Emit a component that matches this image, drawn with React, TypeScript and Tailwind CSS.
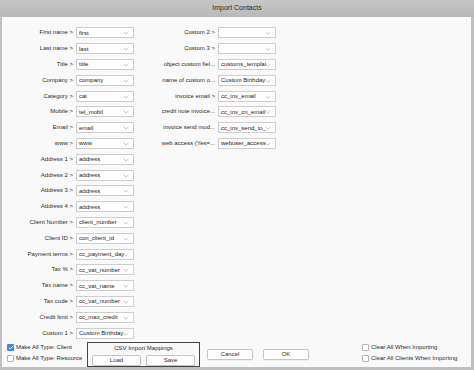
import React from "react";

const leftFields: [string, string][] = [
  ["First name >", "first"],
  ["Last name >", "last"],
  ["Title >", "title"],
  ["Company >", "company"],
  ["Category >", "cat"],
  ["Mobile >", "tel_mobil"],
  ["Email >", "email"],
  ["www >", "www"],
  ["Address 1 >", "address"],
  ["Address 2 >", "address"],
  ["Address 3 >", "address"],
  ["Address 4 >", "address"],
  ["Client Number  >", "client_number"],
  ["Client ID >", "con_client_id"],
  ["Payment terms >", "cc_payment_days"],
  ["Tax % >", "cc_vat_number"],
  ["Tax name >", "cc_vat_name"],
  ["Tax code >", "cc_vat_number"],
  ["Credit limit >", "cc_max_credit"],
  ["Custom 1 >", "Custom Birthday"],
];

const rightFields: [string, string][] = [
  ["Custom 2 >", ""],
  ["Custom 3 >", ""],
  ["object custom fiel...", "customs_template"],
  ["name of custom o...", "Custom Birthday"],
  ["invoice email >", "cc_inv_email"],
  ["credit note invoice...", "cc_inv_cn_email"],
  ["invoice send mod...", "cc_inv_send_to_"],
  ["web access (Yes=...", "webuser_access"],
];

function Select({ value }: { value: string }) {
  return (
    <div className="relative flex h-[11px] w-[58px] items-center border border-[#cdcdcd] bg-white">
      <span className="w-[47px] overflow-hidden whitespace-nowrap pl-[2px] leading-none text-[#222]">
        {value}
      </span>
      <svg
        className="absolute right-[4px] top-[3px]"
        width="6"
        height="4"
        viewBox="0 0 6 4"
        fill="none"
      >
        <path d="M0.5 0.7 L3 3.2 L5.5 0.7" stroke="#b5b5b5" strokeWidth="0.8" />
      </svg>
    </div>
  );
}

function Row({ label, value, labelWidth }: { label: string; value: string; labelWidth: string }) {
  return (
    <div className="flex h-[15.8px] items-center">
      <span className={`${labelWidth} whitespace-nowrap pr-[3px] text-right text-[#2a2a2a]`}>
        {label}
      </span>
      <Select value={value} />
    </div>
  );
}

function Checkbox({ checked, label }: { checked?: boolean; label: string }) {
  return (
    <div className="flex h-[11px] items-center gap-[2px]">
      {checked ? (
        <span className="flex h-[7px] w-[7px] items-center justify-center rounded-[1px] bg-[#3b87e0]">
          <svg width="6" height="5" viewBox="0 0 6 5" fill="none">
            <path d="M0.8 2.6 L2.3 4 L5.2 0.8" stroke="white" strokeWidth="1" />
          </svg>
        </span>
      ) : (
        <span className="h-[7px] w-[7px] rounded-[1px] border border-[#b4b4b4] bg-white" />
      )}
      <span className="whitespace-nowrap text-[#2a2a2a]">{label}</span>
    </div>
  );
}

function Button({ children, w }: { children: React.ReactNode; w: string }) {
  return (
    <div
      className={`${w} flex h-[11px] items-center justify-center rounded-[2px] border border-[#c4c4c4] bg-white text-[#2a2a2a] shadow-[0_0.5px_0_rgba(0,0,0,0.08)]`}
    >
      {children}
    </div>
  );
}

export default function App() {
  return (
    <div
      className="flex h-[370px] w-[474px] flex-col bg-[#c0c0c0] text-[6px]"
      style={{ fontFamily: '"Liberation Sans", Arial, sans-serif' }}
    >
      <div className="flex h-[17px] items-center justify-center bg-gradient-to-b from-[#c6c6c6] to-[#b9b9b9] text-[7px] text-[#2b2b2b]">
        Import Contacts
      </div>
      <div className="mb-[3px] ml-[2px] mr-[3px] flex flex-1 flex-col bg-[#f9f9f9]">
        <div className="flex pt-[8px]">
          <div className="flex flex-col">
            {leftFields.map(([l, v], i) => (
              <Row key={i} label={l} value={v} labelWidth="w-[74px]" />
            ))}
          </div>
          <div className="flex flex-col">
            {rightFields.map(([l, v], i) => (
              <Row key={i} label={l} value={v} labelWidth="w-[84px]" />
            ))}
          </div>
        </div>
        <div className="flex flex-1 items-end pb-[0px]">
          <div className="mb-[3px] ml-[5px] flex w-[80px] flex-col">
            <Checkbox checked label="Make All Type: Client" />
            <Checkbox label="Make All Type: Resource" />
          </div>
          <div className="flex h-[25px] w-[113px] flex-col items-center border border-[#444] pt-[1px]">
            <span className="text-[#2a2a2a]">CSV Import Mappings</span>
            <div className="mt-[2px] flex gap-[5px]">
              <Button w="w-[49px]">Load</Button>
              <Button w="w-[49px]">Save</Button>
            </div>
          </div>
          <div className="mb-[7px] ml-[7px] flex gap-[10px]">
            <Button w="w-[46px]">Cancel</Button>
            <Button w="w-[46px]">OK</Button>
          </div>
          <div className="mb-[3px] ml-[53px] flex flex-col">
            <Checkbox label="Clear All When Importing" />
            <Checkbox label="Clear All Clients When Importing" />
          </div>
        </div>
      </div>
    </div>
  );
}
